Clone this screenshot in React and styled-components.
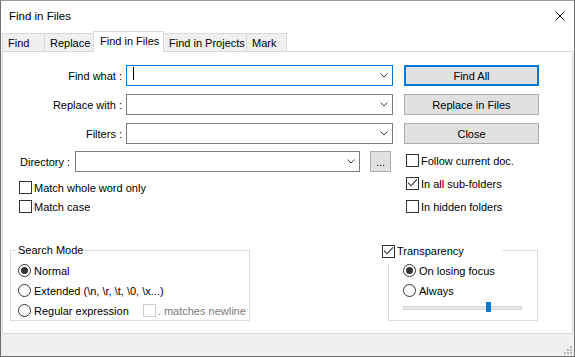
import styled, { createGlobalStyle } from "styled-components";

const GlobalStyle = createGlobalStyle`
  html, body {
    margin: 0;
    padding: 0;
    background: #fff;
  }
  body {
    font-family: "Liberation Sans", Arial, sans-serif;
    font-size: 11px;
    color: #000;
  }
  *, *::before, *::after {
    box-sizing: border-box;
  }
`;

const tabs = [
  { label: "Find", w: 43 },
  { label: "Replace", w: 51 },
  { label: "Find in Files", w: 71, active: true },
  { label: "Find in Projects", w: 84 },
  { label: "Mark", w: 41 },
];

const fields = [
  { label: "Find what :", focused: true },
  { label: "Replace with :" },
  { label: "Filters :" },
];

const Chevron = () => (
  <svg width="8" height="5" viewBox="0 0 8 5">
    <path d="M0.5 0.5 L4 4 L7.5 0.5" fill="none" stroke="#444" strokeWidth="1" />
  </svg>
);

const Tick = () => (
  <svg width="11" height="11" viewBox="0 0 11 11">
    <path d="M1 4.6 L4 7.8 L10 1.4" fill="none" stroke="#333" strokeWidth="1.1" />
  </svg>
);

const CheckOption = ({ checked, disabled, children }) => (
  <CheckRow $disabled={disabled}>
    <Box $disabled={disabled}>{checked && <Tick />}</Box>
    <span>{children}</span>
  </CheckRow>
);

const RadioOption = ({ checked, children }) => (
  <RadioRow>
    <Circle $checked={checked} />
    <span>{children}</span>
  </RadioRow>
);

export default function App() {
  const opacity = 0.73;
  const trackW = 119;
  const thumbW = 5;

  return (
    <>
      <GlobalStyle />
      <Window>
        <TitleBar>
          <Title>Find in Files</Title>
          <svg width="10" height="10" viewBox="0 0 10 10">
            <path d="M0.5 0.5 L9.5 9.5 M9.5 0.5 L0.5 9.5" stroke="#000" strokeWidth="1" />
          </svg>
        </TitleBar>

        <TabStrip>
          {tabs.map((t) => (
            <Tab key={t.label} $w={t.w} $active={t.active}>
              {t.label}
            </Tab>
          ))}
        </TabStrip>

        <Body>
          <Panel>
            <TopSection>
              <LeftCol>
                <FieldGrid>
                  {fields.map((f) => (
                    <Field key={f.label}>
                      <Label>{f.label}</Label>
                      <Combo $focused={f.focused}>
                        {f.focused ? <Caret /> : <span />}
                        <Chevron />
                      </Combo>
                    </Field>
                  ))}
                </FieldGrid>

                <DirRow>
                  <DirLabel>Directory :</DirLabel>
                  <Combo $w={285}>
                    <span />
                    <Chevron />
                  </Combo>
                  <BrowseButton>...</BrowseButton>
                </DirRow>

                <LeftChecks>
                  <CheckOption>Match whole word only</CheckOption>
                  <CheckOption>Match case</CheckOption>
                </LeftChecks>
              </LeftCol>

              <RightCol>
                <Button $default>Find All</Button>
                <Button>Replace in Files</Button>
                <Button>Close</Button>
                <RightChecks>
                  <CheckOption>Follow current doc.</CheckOption>
                  <CheckOption checked>In all sub-folders</CheckOption>
                  <CheckOption>In hidden folders</CheckOption>
                </RightChecks>
              </RightCol>
            </TopSection>

            <BottomSection>
              <Group $w={240} $pad={7}>
                <GroupTitle>Search Mode</GroupTitle>
                <RadioOption checked>Normal</RadioOption>
                <RadioOption>Extended (\n, \r, \t, \0, \x...)</RadioOption>
                <RadioLine>
                  <RadioOption>Regular expression</RadioOption>
                  <SubOption>
                    <CheckOption disabled>. matches newline</CheckOption>
                  </SubOption>
                </RadioLine>
              </Group>

              <Group $w={150} $pad={14}>
                <CheckTitle>
                  <Box>
                    <Tick />
                  </Box>
                  <span>Transparency</span>
                </CheckTitle>
                <RadioOption checked>On losing focus</RadioOption>
                <RadioOption>Always</RadioOption>
                <Slider $w={trackW}>
                  <Track />
                  <Thumb
                    $w={thumbW}
                    style={{ left: Math.round(opacity * (trackW - thumbW)) }}
                  />
                </Slider>
              </Group>
            </BottomSection>
          </Panel>

          <Footer>
            <svg width="8" height="8" viewBox="0 0 8 8">
              {[
                [6, 0],
                [3, 3],
                [6, 3],
                [0, 6],
                [3, 6],
                [6, 6],
              ].map(([x, y]) => (
                <rect key={`${x}-${y}`} x={x} y={y} width="2" height="2" fill="#b4b4b4" />
              ))}
            </svg>
          </Footer>
        </Body>
      </Window>
    </>
  );
}

const Window = styled.div`
  width: 575px;
  height: 357px;
  display: flex;
  flex-direction: column;
  background: #fff;
  border: 1px solid #6e6e6e;
  border-top-color: #9a9a9a;
  overflow: hidden;
`;

const TitleBar = styled.div`
  height: 30px;
  flex-shrink: 0;
  display: flex;
  align-items: center;
  justify-content: space-between;
  padding: 0 9px 0 8px;
`;

const Title = styled.div`
  font-size: 11.5px;
`;

const TabStrip = styled.div`
  height: 21px;
  flex-shrink: 0;
  display: flex;
  align-items: flex-end;
  padding-left: 1px;
  margin-bottom: -1px;
  position: relative;
  z-index: 1;
`;

const Tab = styled.div`
  width: ${(p) => p.$w}px;
  height: ${(p) => (p.$active ? 21 : 19)}px;
  margin-left: ${(p) => (p.$active ? -2 : -1)}px;
  padding-left: ${(p) => (p.$active ? 6 : 5)}px;
  padding-bottom: ${(p) => (p.$active ? 2 : 0)}px;
  display: flex;
  align-items: center;
  white-space: nowrap;
  background: ${(p) => (p.$active ? "#fff" : "#f0f0f0")};
  border: 1px solid #d9d9d9;
  border-bottom: ${(p) => (p.$active ? "none" : "1px solid #d9d9d9")};
  position: relative;
  z-index: ${(p) => (p.$active ? 2 : 1)};

  &:first-child {
    margin-left: 0;
  }
`;

const Body = styled.div`
  flex: 1;
  display: flex;
  flex-direction: column;
  background: #f0f0f0;
  padding: 0 1px;
`;

const Panel = styled.div`
  height: 283px;
  flex-shrink: 0;
  display: flex;
  flex-direction: column;
  background: #fff;
  border: 1px solid #d9d9d9;
  padding: 13px 0 12px 0;
`;

const TopSection = styled.div`
  display: flex;
  gap: 11px;
  padding-left: 16px;
`;

const LeftCol = styled.div`
  width: 374px;
  display: flex;
  flex-direction: column;
`;

const FieldGrid = styled.div`
  display: flex;
  flex-direction: column;
  gap: 8px;
`;

const Field = styled.div`
  display: grid;
  grid-template-columns: 103px 267px;
  column-gap: 4px;
  height: 21px;
`;

const Label = styled.div`
  display: flex;
  align-items: center;
  justify-content: flex-end;
  white-space: nowrap;
`;

const Combo = styled.div`
  width: ${(p) => (p.$w ? `${p.$w}px` : "auto")};
  height: 21px;
  display: flex;
  align-items: center;
  justify-content: space-between;
  padding: 0 4px 0 6px;
  background: #fff;
  border: 1px solid ${(p) => (p.$focused ? "#0078d7" : "#7a7a7a")};
`;

const Caret = styled.span`
  width: 1px;
  height: 13px;
  background: #000;
  align-self: flex-start;
  margin-top: 1px;
`;

const DirRow = styled.div`
  display: flex;
  align-items: center;
  height: 21px;
  margin-top: 7px;
`;

const DirLabel = styled.div`
  width: 56px;
  padding-left: 1px;
  white-space: nowrap;
`;

const BrowseButton = styled.div`
  width: 21px;
  height: 21px;
  margin-left: 10px;
  display: flex;
  align-items: center;
  justify-content: center;
  padding-top: 1px;
  background: #e1e1e1;
  border: 1px solid #adadad;
`;

const LeftChecks = styled.div`
  display: flex;
  flex-direction: column;
  gap: 2px;
  margin-top: 7px;
`;

const RightCol = styled.div`
  width: 135px;
  display: flex;
  flex-direction: column;
  gap: 8px;
`;

const Button = styled.div`
  height: 21px;
  display: flex;
  align-items: center;
  justify-content: center;
  background: #e1e1e1;
  border: ${(p) => (p.$default ? "2px solid #0078d7" : "1px solid #adadad")};
`;

const RightChecks = styled.div`
  display: flex;
  flex-direction: column;
  gap: 6px;
  padding-left: 2px;
`;

const CheckRow = styled.div`
  height: 17px;
  display: flex;
  align-items: center;
  gap: 2px;
  white-space: nowrap;
  color: ${(p) => (p.$disabled ? "#7a7a7a" : "#000")};
`;

const Box = styled.span`
  width: 13px;
  height: 13px;
  flex-shrink: 0;
  display: flex;
  background: #fff;
  border: 1px solid ${(p) => (p.$disabled ? "#cccccc" : "#333")};
`;

const BottomSection = styled.div`
  margin-top: auto;
  display: flex;
  justify-content: space-between;
  align-items: flex-end;
  padding: 0 34px 0 7px;
`;

const Group = styled.div`
  position: relative;
  width: ${(p) => p.$w}px;
  height: 71px;
  display: flex;
  flex-direction: column;
  gap: 3px;
  padding: 11px 0 0 ${(p) => p.$pad}px;
  border: 1px solid #dcdcdc;
`;

const GroupTitle = styled.div`
  position: absolute;
  top: -8px;
  left: 5px;
  padding: 0 2px;
  line-height: 15px;
  background: #fff;
`;

const CheckTitle = styled.div`
  position: absolute;
  top: -8px;
  left: -7px;
  width: 120px;
  height: 20px;
  display: flex;
  align-items: flex-start;
  gap: 2px;
  padding-top: 2px;
  line-height: 13px;
  background: #fff;
`;

const RadioLine = styled.div`
  display: flex;
  align-items: center;
`;

const RadioRow = styled.div`
  height: 17px;
  display: flex;
  align-items: center;
  gap: 3px;
  white-space: nowrap;
`;

const Circle = styled.span`
  width: 13px;
  height: 13px;
  flex-shrink: 0;
  display: flex;
  align-items: center;
  justify-content: center;
  border: 1px solid #333;
  border-radius: 50%;
  background: #fff;

  &::after {
    content: "";
    width: 7px;
    height: 7px;
    border-radius: 50%;
    background: ${(p) => (p.$checked ? "#333" : "transparent")};
  }
`;

const SubOption = styled.div`
  margin-left: 14px;
`;

const Slider = styled.div`
  position: relative;
  width: ${(p) => p.$w}px;
  height: 10px;
`;

const Track = styled.div`
  margin-top: 4px;
  height: 4px;
  background: #e7e7e7;
  border: 1px solid #d6d6d6;
`;

const Thumb = styled.div`
  position: absolute;
  top: 0;
  width: ${(p) => p.$w}px;
  height: 10px;
  background: #0078d7;
`;

const Footer = styled.div`
  flex: 1;
  display: flex;
  align-items: flex-end;
  justify-content: flex-end;
  padding: 0 1px 2px 0;
`;
